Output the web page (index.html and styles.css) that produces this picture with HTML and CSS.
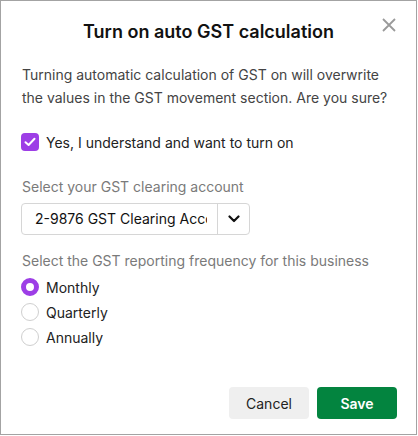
FILE: index.html
```html
<!DOCTYPE html>
<html lang="en">
<head>
  <meta charset="UTF-8" />
  <title>Turn on auto GST calculation</title>
  <link rel="stylesheet" href="styles.css">
</head>
<body>
  <div class="dialog">
    <div class="dialog-header">
      <h2>Turn on auto GST calculation</h2>
      <button class="close" aria-label="Close">
        <svg width="14" height="14" viewBox="0 0 14 14"><path d="M1 1L13 13M13 1L1 13" stroke="#9a9a9a" stroke-width="1.8" fill="none"/></svg>
      </button>
    </div>

    <div class="dialog-body">
      <p class="warning">Turning automatic calculation of GST on will overwrite the values in the GST movement section. Are you sure?</p>

      <label class="check">
        <span class="box">
          <svg width="12" height="10" viewBox="0 0 12 10"><path d="M1.5 5.2L4.6 8L10.5 1.8" stroke="#fff" stroke-width="2" fill="none" stroke-linecap="round" stroke-linejoin="round"/></svg>
        </span>
        Yes, I understand and want to turn on
      </label>

      <div class="field-label">Select your GST clearing account</div>
      <div class="select">
        <span class="select-value">2-9876 GST Clearing Account</span>
        <span class="select-arrow">
          <svg width="12" height="8" viewBox="0 0 12 8"><path d="M1.5 1.5L6 6L10.5 1.5" stroke="#111" stroke-width="2.2" fill="none" stroke-linecap="round" stroke-linejoin="round"/></svg>
        </span>
      </div>

      <div class="field-label">Select the GST reporting frequency for this business</div>
      <div class="radios">
        <label class="radio"><span class="dot on"></span>Monthly</label>
        <label class="radio"><span class="dot"></span>Quarterly</label>
        <label class="radio"><span class="dot"></span>Annually</label>
      </div>
    </div>

    <div class="dialog-footer">
      <button class="btn cancel">Cancel</button>
      <button class="btn save">Save</button>
    </div>
  </div>
</body>
</html>
```

FILE: styles.css
```css
body {
  margin: 0;
  font-family: Inter, 'Noto Sans', sans-serif;
  background: #fff;
  color: #222;
}
.dialog {
  width: 417px;
  height: 435px;
  box-sizing: border-box;
  border: 1px solid #a3a3a3;
  display: flex;
  flex-direction: column;
}
.dialog-header {
  position: relative;
  padding: 19px 20px 0;
  height: 45px;
  box-sizing: border-box;
}
.dialog-header h2 {
  margin: 0;
  text-align: center;
  font-size: 18px;
  font-weight: 600;
  color: #111;
  line-height: 24px;
}
.close {
  position: absolute;
  top: 17px;
  right: 20px;
  border: none;
  background: none;
  padding: 0;
  cursor: pointer;
}
.dialog-body {
  padding: 0 20px;
  flex: 1;
}
.warning {
  margin: 17px 0 0;
  padding-left: 1px;
  font-size: 14px;
  line-height: 23px;
  color: #444;
}
.check {
  display: flex;
  align-items: center;
  gap: 7px;
  margin-top: 24px;
  font-size: 14px;
  color: #222;
}
.box {
  width: 18px;
  height: 18px;
  border-radius: 4px;
  background: #9d3ee6;
  display: flex;
  align-items: center;
  justify-content: center;
}
.field-label {
  margin-top: 26px;
  padding-left: 1px;
  font-size: 14px;
  color: #7a7a7a;
  line-height: 20px;
}
.select {
  display: flex;
  width: 229px;
  height: 32px;
  box-sizing: border-box;
  border: 1px solid #d6d6d6;
  border-radius: 4px;
  margin-top: 6px;
}
.select-value {
  flex: 1;
  overflow: hidden;
  white-space: nowrap;
  margin: 0 10px 0 13px;
  line-height: 30px;
  font-size: 14px;
  color: #111;
}
.select-arrow {
  width: 31px;
  border-left: 1px solid #d6d6d6;
  display: flex;
  align-items: center;
  justify-content: center;
}
.select + .field-label {
  margin-top: 16px;
}
.radios {
  margin-top: 7px;
  display: flex;
  flex-direction: column;
  gap: 7px;
}
.radio {
  display: flex;
  align-items: center;
  gap: 7px;
  font-size: 14px;
  color: #222;
  height: 18px;
}
.dot {
  width: 18px;
  height: 18px;
  box-sizing: border-box;
  border-radius: 50%;
  border: 1px solid #cfcfcf;
  background: #fff;
}
.dot.on {
  border: 5px solid #9d3ee6;
}
.dialog-footer {
  display: flex;
  justify-content: flex-end;
  gap: 8px;
  padding: 0 19px 15px;
}
.btn {
  width: 80px;
  height: 32px;
  border: none;
  border-radius: 4px;
  font-family: inherit;
  font-size: 14px;
  cursor: pointer;
}
.cancel {
  background: #efefef;
  color: #222;
}
.save {
  background: #03843f;
  color: #fff;
  font-weight: 600;
}
```
